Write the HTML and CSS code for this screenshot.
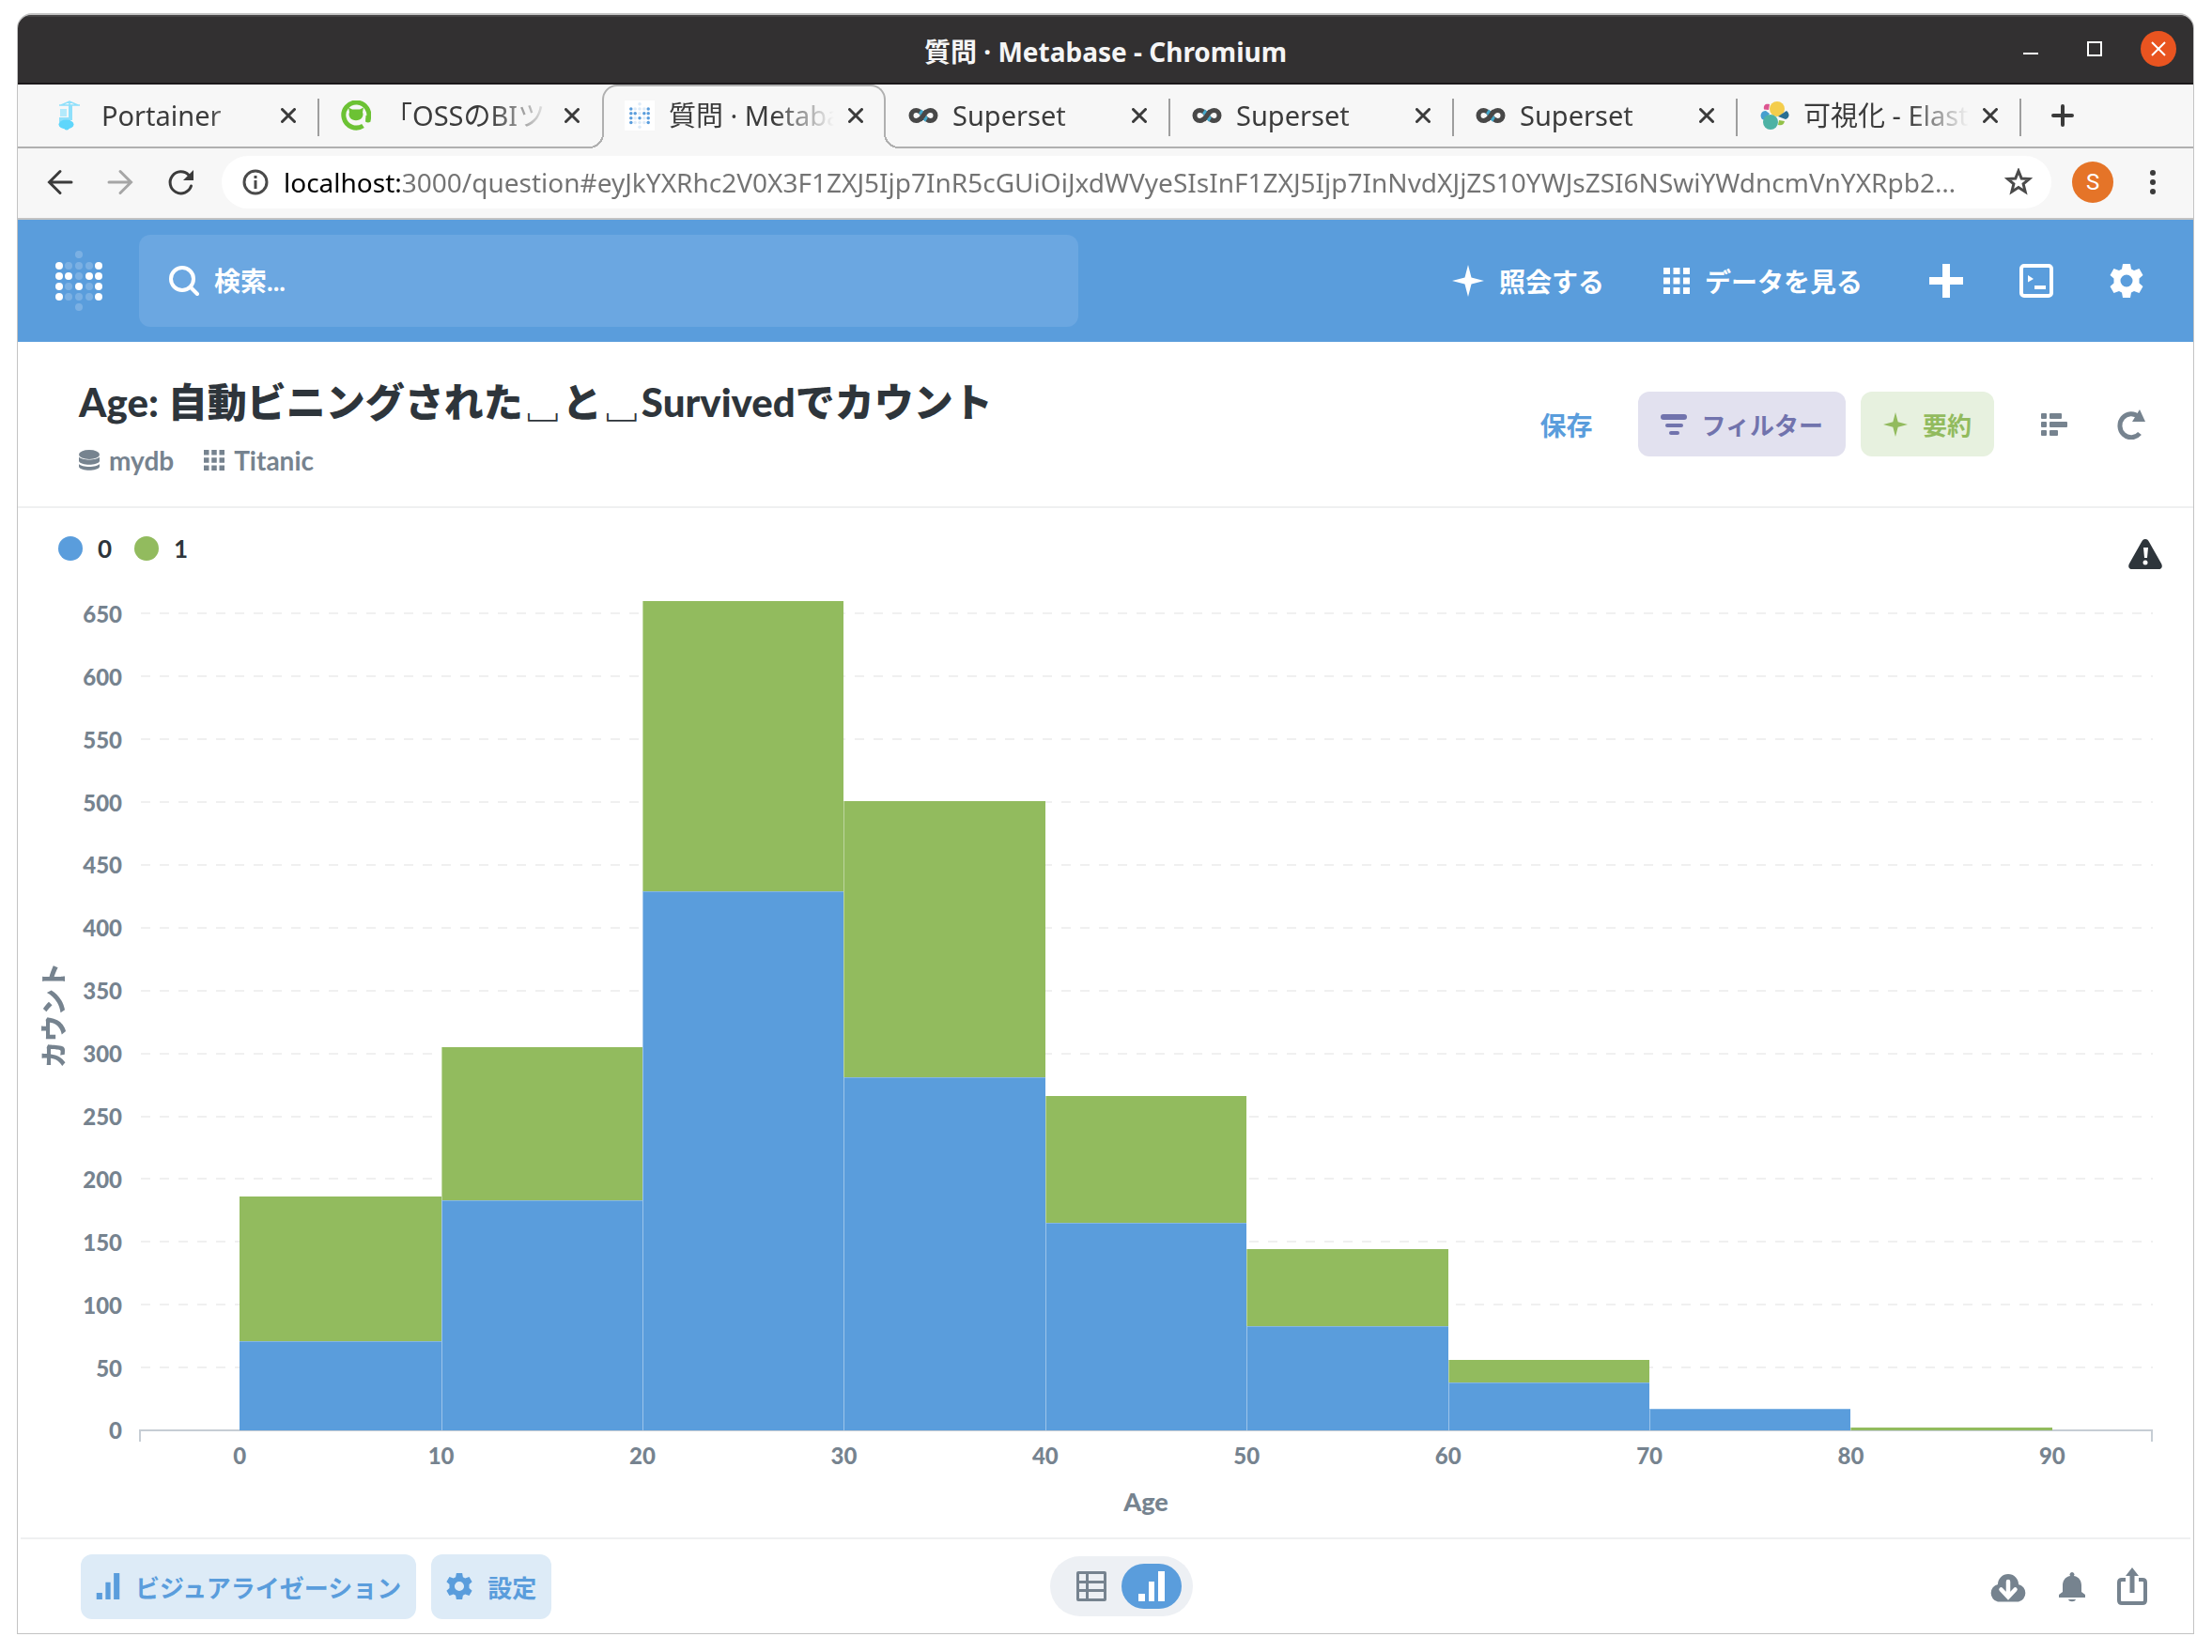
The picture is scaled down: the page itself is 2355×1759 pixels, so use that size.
FILE: index.html
```html
<!DOCTYPE html>
<html lang="ja">
<head>
<meta charset="utf-8">
<title>質問 · Metabase</title>
<link rel="stylesheet" href="styles.css">
</head>
<body>
<svg class="sprite" aria-hidden="true">
  <symbol id="i-logo" viewBox="0 0 50 64">
    <g fill="currentColor">
      <circle cx="4" cy="16" r="4"/><circle cx="46" cy="16" r="4"/>
      <circle cx="4" cy="27" r="4"/><circle cx="14" cy="27" r="4"/><circle cx="36" cy="27" r="4"/><circle cx="46" cy="27" r="4"/>
      <circle cx="4" cy="38" r="4"/><circle cx="25" cy="38" r="4"/><circle cx="46" cy="38" r="4"/>
      <circle cx="4" cy="49" r="4"/><circle cx="46" cy="49" r="4"/>
      <g opacity=".2">
        <circle cx="25" cy="4" r="4"/><circle cx="25" cy="60" r="4"/>
        <circle cx="14" cy="16" r="4"/><circle cx="25" cy="16" r="4"/><circle cx="36" cy="16" r="4"/>
        <circle cx="25" cy="27" r="4"/><circle cx="14" cy="38" r="4"/><circle cx="36" cy="38" r="4"/>
        <circle cx="14" cy="49" r="4"/><circle cx="25" cy="49" r="4"/><circle cx="36" cy="49" r="4"/>
      </g>
    </g>
  </symbol>
  <symbol id="i-x" viewBox="0 0 16 16"><path d="M1.5 1.5 14.5 14.5M14.5 1.5 1.5 14.5" stroke="currentColor" stroke-width="3" stroke-linecap="round" fill="none"/></symbol>
  <symbol id="i-infinity" viewBox="0 0 32 32">
    <path d="M16 16C13 11.500 11 10.500 8.500 10.500a5.500 5.500 0 0 0 0 11C11 21.500 13 20.500 16 16S21 10.500 23.500 10.500a5.500 5.500 0 0 1 0 11C21 21.500 19 20.500 16 16Z" fill="none" stroke="#484848" stroke-width="5"/>
    <path d="M12.500 11.500C14 12.500 15 14.500 16 16S18.500 20 19.500 20.600" fill="none" stroke="#45a9cc" stroke-width="5"/>
    <path d="M12.500 20.500C14 19.500 15 17.500 16 16S18 12.500 19.500 11.500" fill="none" stroke="#484848" stroke-width="5"/>
  </symbol>
  <symbol id="i-spark" viewBox="0 0 34 34"><path d="M17 0 20.500 13.500 34 17 20.500 20.500 17 34 13.500 20.500 0 17 13.500 13.500Z" fill="currentColor"/></symbol>
  <symbol id="i-grid" viewBox="0 0 28 28"><path d="M0 0h7v7H0zM10.500 0h7v7h-7zM21 0h7v7h-7zM0 10.500h7v7H0zM10.500 10.500h7v7h-7zM21 10.500h7v7h-7zM0 21h7v7H0zM10.500 21h7v7h-7zM21 21h7v7h-7z" fill="currentColor"/></symbol>
  <symbol id="i-gear" viewBox="0 0 36 36"><path fill="currentColor" fill-rule="evenodd" d="M14 0h8l1 5.500 3 1.500 5.500-2L35.500 12 31.500 15.500v5L35.500 24 31.500 31 26 29l-3 1.500L22 36h-8l-1-5.500L10 29l-5.500 2L.5 24l4-3.500v-5L.5 12 4.500 5 10 7l3-1.500ZM18 11.500a6.500 6.500 0 1 0 0 13 6.500 6.500 0 0 0 0-13Z"/></symbol>
  <symbol id="i-bars" viewBox="0 0 28 32"><path d="M0 24h7v8H0zM11 11h6v21h-6zM21 0h7v32h-7z" fill="currentColor"/></symbol>
</svg>

<div class="window">
  <header class="titlebar">
    <h1 class="window-title">質問 · Metabase - Chromium</h1>
    <div class="window-controls">
      <button class="wc" aria-label="最小化"><svg width="16" height="16"><path d="M0 13h16" stroke="#fff" stroke-width="2"/></svg></button>
      <button class="wc" aria-label="最大化"><svg width="16" height="16"><rect x="1" y="1" width="14" height="14" fill="none" stroke="#fff" stroke-width="2"/></svg></button>
      <button class="wc wc-close" aria-label="閉じる"><svg width="16" height="16"><path d="M1 1l14 14M15 1 1 15" stroke="#fff" stroke-width="2"/></svg></button>
    </div>
  </header>

  <nav class="tabs">
    <div class="tab">
      <svg class="favicon" viewBox="0 0 32 32"><g fill="none" stroke="#8fe0fb" stroke-width="1.500"><path d="M2 5h22M13 1v6M4 5l9-4 9 4"/></g><path d="M12 5h4v16h-4z" fill="#8fe0fb"/><path d="M3 9h7v8H3z" fill="#b3eafc"/><path d="M2 18h12v5H2z" fill="#8fe0fb"/><ellipse cx="9.500" cy="25.500" rx="8" ry="5" fill="#5fd6fb"/><circle cx="10" cy="29" r="2.500" fill="#5fd6fb"/></svg>
      <a class="tab-title" href="#">Portainer</a>
      <button class="tab-close" aria-label="タブを閉じる"><svg><use href="#i-x"/></svg></button>
    </div>
    <div class="tab no-rule">
      <svg class="favicon" viewBox="0 0 32 32"><path d="M28.900 20.500A13.500 13.500 0 1 0 23.500 27" fill="none" stroke="#6cc234" stroke-width="5"/><path d="M26 22.500q3 2 5.500 0V16h-5z" fill="#6cc234"/><path d="m8 7.500 4 2h8l4-2-1 5a7.500 6.500 0 1 1-14 0Z" fill="#6cc234"/></svg>
      <a class="tab-title" href="#">「OSSのBIツ</a>
      <button class="tab-close" aria-label="タブを閉じる"><svg><use href="#i-x"/></svg></button>
    </div>
    <div class="tab active no-rule">
      <span class="favicon favicon-metabase"><svg><use href="#i-logo"/></svg></span>
      <a class="tab-title" href="#" aria-current="page">質問 · Metabase</a>
      <button class="tab-close" aria-label="タブを閉じる"><svg><use href="#i-x"/></svg></button>
    </div>
    <div class="tab">
      <svg class="favicon"><use href="#i-infinity"/></svg>
      <a class="tab-title" href="#">Superset</a>
      <button class="tab-close" aria-label="タブを閉じる"><svg><use href="#i-x"/></svg></button>
    </div>
    <div class="tab">
      <svg class="favicon"><use href="#i-infinity"/></svg>
      <a class="tab-title" href="#">Superset</a>
      <button class="tab-close" aria-label="タブを閉じる"><svg><use href="#i-x"/></svg></button>
    </div>
    <div class="tab">
      <svg class="favicon"><use href="#i-infinity"/></svg>
      <a class="tab-title" href="#">Superset</a>
      <button class="tab-close" aria-label="タブを閉じる"><svg><use href="#i-x"/></svg></button>
    </div>
    <div class="tab">
      <svg class="favicon" viewBox="0 0 32 32"><ellipse cx="19" cy="9" rx="8" ry="8" fill="#f4cd4c"/><path d="M5 9.500c-1-5 2-6.500 6-5.500l-1 6z" fill="#dc5590"/><path d="M3 20c-3-4-1-9 4-9l4 3-5 7z" fill="#459fcf"/><path d="M20 17l9-6c4 3 3 8-1 9z" fill="#2b6f92"/><path d="M21 21l6 1c-1 4-3 5-7 4z" fill="#93c148"/><ellipse cx="12" cy="23" rx="8" ry="8" fill="#4db2a4"/></svg>
      <a class="tab-title" href="#">可視化 - Elastic</a>
      <button class="tab-close" aria-label="タブを閉じる"><svg><use href="#i-x"/></svg></button>
    </div>
    <button class="tab-new" aria-label="新しいタブ"><svg width="24" height="24"><path d="M12 2v20M2 12h20" stroke="#3b3b3b" stroke-width="4" stroke-linecap="round"/></svg></button>
  </nav>

  <div class="toolbar">
    <button class="nav-btn" aria-label="戻る"><svg width="32" height="32" fill="none" stroke="#3b3b3b" stroke-width="3" stroke-linecap="round"><path d="M28 16H5M16 4.500 4.500 16 16 27.500"/></svg></button>
    <button class="nav-btn" aria-label="進む"><svg width="32" height="32" fill="none" stroke="#a6a6a6" stroke-width="3" stroke-linecap="round"><path d="M4 16h23M16 4.500 27.500 16 16 27.500"/></svg></button>
    <button class="nav-btn" aria-label="再読み込み"><svg width="32" height="32"><path d="M27.500 20A11.500 11.500 0 1 1 25 8.500" fill="none" stroke="#3b3b3b" stroke-width="3" stroke-linecap="round"/><path d="M30 3v11H19z" fill="#3b3b3b"/></svg></button>
    <div class="omnibox">
      <button class="omni-btn" aria-label="サイト情報"><svg width="28" height="28"><circle cx="14" cy="14" r="12" fill="none" stroke="#4a4a4a" stroke-width="3"/><path d="M14 7v3M14 12v9" stroke="#4a4a4a" stroke-width="3"/></svg></button>
      <input class="url" type="text" aria-label="アドレス" value="localhost:3000/question#eyJkYXRhc2V0X3F1ZXJ5Ijp7InR5cGUiOiJxdWVyeSIsInF1ZXJ5Ijp7InNvdXJjZS10YWJsZSI6NSwiYWdncmVnYXRpb2…">
      <button class="omni-btn" aria-label="ブックマーク"><svg width="30" height="30"><path d="m15 3 3.200 8 8.300.5-6.400 5.400 2.100 8.300L15 20.600l-7.200 4.600 2.100-8.300-6.400-5.400 8.300-.5z" fill="none" stroke="#4a4a4a" stroke-width="3"/></svg></button>
    </div>
    <button class="avatar" aria-label="プロフィール">S</button>
    <button class="nav-btn" aria-label="メニュー"><svg width="32" height="32" fill="#3b3b3b"><circle cx="16" cy="6" r="3"/><circle cx="16" cy="16" r="3"/><circle cx="16" cy="26" r="3"/></svg></button>
  </div>

  <div class="app-bar">
    <a class="logo" href="#" aria-label="ホーム"><svg width="50" height="64"><use href="#i-logo"/></svg></a>
    <label class="search">
      <svg width="32" height="32" fill="none" stroke="#fff" stroke-width="4" stroke-linecap="round"><circle cx="14" cy="14" r="12"/><path d="m23 23 7 7"/></svg>
      <input type="search" aria-label="検索" placeholder="検索...">
    </label>
    <nav class="app-nav">
      <a class="app-link ask" href="#"><svg width="34" height="34"><use href="#i-spark"/></svg>照会する</a>
      <a class="app-link browse" href="#"><svg width="28" height="28"><use href="#i-grid"/></svg>データを見る</a>
      <button class="app-icon" aria-label="作成"><svg width="36" height="36"><path d="M18 0v36M0 18h36" stroke="#fff" stroke-width="8"/></svg></button>
      <button class="app-icon" aria-label="SQL"><svg width="36" height="36"><rect x="2" y="2" width="32" height="32" rx="3" fill="none" stroke="#fff" stroke-width="4"/><path d="m9 12 6 4-6 3.500zM16 23h12v4H16z" fill="#fff"/></svg></button>
      <button class="app-icon" aria-label="設定"><svg width="36" height="36"><use href="#i-gear"/></svg></button>
    </nav>
  </div>

  <section class="question-head">
    <div class="question-info">
      <h2 class="question-title">Age: 自動ビニングされた␣と␣Survivedでカウント</h2>
      <div class="crumbs">
        <a href="#"><svg width="22" height="22" fill="currentColor"><ellipse cx="11" cy="5" rx="11" ry="5"/><path d="M0 7.500c3 4 19 4 22 0V12c-2 5-20 5-22 0zM0 15c3 4 19 4 22 0v3c-2 5-20 5-22 0z"/></svg>mydb</a>
        <a href="#"><svg width="22" height="22"><use href="#i-grid"/></svg>Titanic</a>
      </div>
    </div>
    <div class="question-actions">
      <button class="save">保存</button>
      <button class="btn btn-filter"><svg width="28" height="24" fill="currentColor"><rect y="1" width="28" height="6" rx="3"/><rect x="5" y="11" width="19" height="4" rx="2"/><rect x="9" y="19" width="11" height="4" rx="2"/></svg>フィルター</button>
      <button class="btn btn-summary"><svg width="26" height="26"><use href="#i-spark"/></svg>要約</button>
      <button class="plain list" aria-label="通知"><svg width="28" height="24" fill="currentColor"><rect width="6" height="6" rx="1"/><rect x="9" width="13" height="6" rx="1"/><rect y="9" width="6" height="6" rx="1"/><rect x="9" y="9" width="19" height="6" rx="1"/><rect y="18" width="6" height="6" rx="1"/><rect x="9" y="18" width="9" height="6" rx="1"/></svg></button>
      <button class="plain" aria-label="更新"><svg width="32" height="32"><path d="M25 25.500A12 12.500 0 1 1 24 8" fill="none" stroke="currentColor" stroke-width="5"/><path d="M25 0l6 13H17z" fill="currentColor"/></svg></button>
    </div>
  </section>

  <main class="viz">
    <div class="legend">
      <span class="key key-0">0</span>
      <span class="key key-1">1</span>
      <svg class="warning" width="36" height="32"><path d="M18 0c2 0 3 1 4 3l13 23c2 4 0 6-3 6H4c-3 0-5-2-3-6L14 3c1-2 2-3 4-3z" fill="#2e353b"/><path d="M16 9h5l-1 11h-3z" fill="#fff"/><circle cx="18" cy="25" r="2.500" fill="#fff"/></svg>
    </div>
    <div class="chart">
      <div class="y-title">カウント</div>
      <div class="bands">
        <div class="headroom"></div>
        <div class="band"><div class="tick"><span>650</span></div></div>
        <div class="band"><div class="tick"><span>600</span></div></div>
        <div class="band"><div class="tick"><span>550</span></div></div>
        <div class="band"><div class="tick"><span>500</span></div></div>
        <div class="band"><div class="tick"><span>450</span></div></div>
        <div class="band"><div class="tick"><span>400</span></div></div>
        <div class="band"><div class="tick"><span>350</span></div></div>
        <div class="band"><div class="tick"><span>300</span></div></div>
        <div class="band"><div class="tick"><span>250</span></div></div>
        <div class="band"><div class="tick"><span>200</span></div></div>
        <div class="band"><div class="tick"><span>150</span></div></div>
        <div class="band"><div class="tick"><span>100</span></div></div>
        <div class="band"><div class="tick"><span>50</span></div></div>
        <div class="tick zero"><span>0</span></div>
      </div>
      <div class="bars">
        <div class="bar"><i class="s1" style="--v:115"></i><i class="s0" style="--v:71"></i></div>
        <div class="bar"><i class="s1" style="--v:122"></i><i class="s0" style="--v:183"></i></div>
        <div class="bar"><i class="s1" style="--v:231"></i><i class="s0" style="--v:429"></i></div>
        <div class="bar"><i class="s1" style="--v:220"></i><i class="s0" style="--v:281"></i></div>
        <div class="bar"><i class="s1" style="--v:101"></i><i class="s0" style="--v:165"></i></div>
        <div class="bar"><i class="s1" style="--v:61"></i><i class="s0" style="--v:83"></i></div>
        <div class="bar"><i class="s1" style="--v:18"></i><i class="s0" style="--v:38"></i></div>
        <div class="bar"><i class="s0" style="--v:17"></i></div>
        <div class="bar"><i class="s1" style="--v:2"></i></div>
      </div>
      <div class="x-axis">
        <div class="x-line"></div>
        <div class="x-labels"><span>0</span><span>10</span><span>20</span><span>30</span><span>40</span><span>50</span><span>60</span><span>70</span><span>80</span><span>90</span></div>
        <div class="x-title">Age</div>
      </div>
    </div>
  </main>

  <footer class="footer">
    <div class="footer-left">
      <button class="btn btn-blue"><svg class="viz-icon" width="26" height="28"><use href="#i-bars"/></svg>ビジュアライゼーション</button>
      <button class="btn btn-blue"><svg width="28" height="28"><use href="#i-gear"/></svg>設定</button>
    </div>
    <div class="toggle">
      <button class="toggle-btn" aria-label="テーブル"><svg width="32" height="32"><path fill="currentColor" fill-rule="evenodd" d="M2 0h28a2 2 0 0 1 2 2v28a2 2 0 0 1-2 2H2a2 2 0 0 1-2-2V2a2 2 0 0 1 2-2ZM3 3v7h7V3zM13 3v7h16V3zM3 13v6h7v-6zM13 13v6h16v-6zM3 22v7h7v-7zM13 22v7h16v-7z"/></svg></button>
      <button class="toggle-btn on" aria-label="グラフ" aria-pressed="true"><svg width="28" height="32"><use href="#i-bars"/></svg></button>
    </div>
    <div class="footer-right">
      <button class="plain" aria-label="ダウンロード"><svg width="40" height="42"><path d="M9 19a11 11 0 0 1 22 0 9.500 9.500 0 0 1 0 18.500H9A9.500 9.500 0 0 1 9 19Z" fill="currentColor"/><path d="M20 16v16M12.500 24.500 20 32.500l7.500-8" fill="none" stroke="#fff" stroke-width="4.500" stroke-linecap="round"/></svg></button>
      <button class="plain bell" aria-label="アラート"><svg width="28" height="42" fill="currentColor"><path d="M12 10a2.500 2.500 0 1 1 4 0c6 1 8 6 8 10v7l4 3v3H0v-3l4-3v-7c0-4 2-9 8-10ZM10 35h8c-1 3-7 3-8 0Z"/></svg></button>
      <button class="plain" aria-label="共有"><svg width="32" height="42"><path d="M9 14H5q-3 0-3 3v19q0 3 3 3h22q3 0 3-3V17q0-3-3-3h-4" fill="none" stroke="currentColor" stroke-width="4"/><path d="M16 1l7 9h-4.500v18h-5V10H9z" fill="currentColor"/></svg></button>
    </div>
  </footer>
</div>
</body>
</html>
```
FILE: styles.css
```css
* { box-sizing: border-box; }

:root {
  --brand: #5a9ddc;
  --green: #92bb5e;
  --purple: #7173ad;
  --grey: #76838f;
  --dark: #2e353b;
  --chrome: #f7f7f7;
}

body {
  margin: 0;
  padding: 14px 19px 19px 18px;
  min-height: 100vh;
  display: flex;
  background: #fff;
  font-family: Lato, "Noto Sans CJK JP", sans-serif;
}

button {
  padding: 0;
  border: 0;
  background: none;
  color: inherit;
  font: inherit;
  display: flex;
  align-items: center;
  justify-content: center;
  cursor: pointer;
}

a { color: inherit; text-decoration: none; }
svg { display: block; flex: none; }
.sprite { position: absolute; width: 0; height: 0; }

.window {
  flex: 1;
  min-width: 0;
  display: flex;
  flex-direction: column;
  border: 1px solid #c3c3c3;
  border-top-width: 2px;
  border-radius: 16px 16px 0 0;
  overflow: hidden;
}

/* Title bar */
.titlebar {
  height: 74px;
  display: grid;
  grid-template-columns: 1fr auto 1fr;
  align-items: center;
  background: #323031;
  border-top: 2px solid #444243;
  border-bottom: 2px solid #1c191b;
  color: #f5f5f5;
  font-family: "Noto Sans", "Noto Sans CJK JP", sans-serif;
}
.window-title {
  grid-column: 2;
  margin: 0;
  padding-top: 4px;
  font-size: 28px;
  line-height: 40px;
  font-weight: 700;
}
.window-controls {
  display: flex;
  justify-content: flex-end;
  align-items: center;
  gap: 30px;
  padding: 0 18px 2px 0;
}
.wc { width: 38px; height: 38px; border-radius: 50%; }
.wc-close { background: #e95420; }

/* Tab strip */
.tabs {
  height: 68px;
  display: flex;
  padding-left: 18px;
  background: var(--chrome);
  border-bottom: 2px solid #b0b0b0;
  color: #3b3b3b;
  font-family: "Noto Sans", "Noto Sans CJK JP", sans-serif;
}
.tab {
  position: relative;
  flex: 0 1 302px;
  min-width: 0;
  display: flex;
  align-items: center;
  gap: 15px;
  padding: 0 24px 0 24px;
}
.tab:not(.no-rule)::after {
  content: "";
  position: absolute;
  right: -1px;
  top: 15px;
  width: 2px;
  height: 40px;
  background: #9e9e9e;
}
.favicon { width: 32px; height: 32px; flex: none; }
.favicon-metabase {
  display: grid;
  place-items: center;
  background: #fff;
  color: var(--brand);
}
.favicon-metabase svg { width: 22px; height: 28px; }
.tab-title {
  flex: 1;
  min-width: 0;
  overflow: hidden;
  white-space: nowrap;
  font-size: 29px;
  line-height: 40px;
  mask-image: linear-gradient(to left, transparent, #000 64px);
}
.tab-close svg { width: 16px; height: 16px; }
.tab.active {
  z-index: 1;
  margin-bottom: -2px;
  padding: 0 22px 4px;
  background: var(--chrome);
  border: 2px solid #b0b0b0;
  border-bottom: 0;
  border-radius: 16px 16px 0 0;
}
.tab.active::before,
.tab.active::after {
  content: "";
  position: absolute;
  bottom: 0;
  top: auto;
  width: 16px;
  height: 16px;
}
.tab.active::before {
  left: -16px;
  background: radial-gradient(circle at 0 0, var(--chrome) 14px, #b0b0b0 14px 16px, var(--chrome) 16px);
}
.tab.active::after {
  right: -16px;
  background: radial-gradient(circle at 100% 0, var(--chrome) 14px, #b0b0b0 14px 16px, var(--chrome) 16px);
}
.tab-new { margin-left: 33px; }

/* Toolbar */
.toolbar {
  height: 76px;
  display: flex;
  align-items: center;
  padding: 8px 27px 10px 29px;
  background: var(--chrome);
  border-bottom: 2px solid #c3c3c3;
  font-family: "Noto Sans", sans-serif;
}
.nav-btn { width: 32px; height: 32px; margin-right: 32px; }
.nav-btn:last-child { margin: 0; }
.omnibox {
  flex: 1;
  height: 56px;
  min-width: 0;
  display: flex;
  align-items: center;
  padding: 0 20px 0 22px;
  margin-right: 22px;
  margin-left: -4px;
  gap: 16px;
  background: #fff;
  border-radius: 28px;
}
.url {
  flex: 1;
  min-width: 0;
  height: 40px;
  padding: 0;
  border: 0;
  outline: 0;
  font-family: inherit;
  font-size: 28px;
  color: transparent;
  background: linear-gradient(to right, #000 126px, #737373 126px);
  background-clip: text;
}
.avatar {
  width: 44px;
  height: 44px;
  margin-right: 26px;
  border-radius: 50%;
  background: #e57428;
  color: #fff;
  font-family: Roboto, sans-serif;
  font-size: 24px;
}

/* Application bar */
.app-bar {
  height: 130px;
  display: flex;
  align-items: center;
  padding: 0 53px 0 40px;
  background: var(--brand);
  color: #fff;
  font-size: 28px;
  font-weight: 700;
}
.logo { margin-right: 39px; }
.search {
  flex: 0 1 1000px;
  height: 98px;
  display: flex;
  align-items: center;
  gap: 16px;
  padding: 0 32px;
  border-radius: 12px;
  background: #6ba7e1;
}
.search input {
  flex: 1;
  min-width: 0;
  padding: 0;
  border: 0;
  outline: 0;
  background: none;
  color: #fff;
  font: inherit;
}
.search input::placeholder { color: #fff; opacity: 1; }
.app-nav {
  margin-left: auto;
  display: flex;
  align-items: center;
  gap: 60px;
  white-space: nowrap;
}
.app-link { display: flex; align-items: center; gap: 16px; }
.ask { margin-right: 3px; }
.app-icon:first-of-type { margin-left: 11px; }

/* Question header */
.question-head {
  height: 177px;
  display: flex;
  align-items: center;
  justify-content: space-between;
  padding: 0 50px 0 65px;
  border-bottom: 2px solid #eff0f1;
}
.question-info { padding-top: 2px; }
.question-title {
  margin: 0;
  font-size: 42px;
  line-height: 60px;
  font-weight: 900;
  color: var(--dark);
}
.crumbs {
  display: flex;
  gap: 32px;
  color: var(--grey);
  font-size: 28px;
  line-height: 36px;
  font-weight: 700;
  padding-top: 14px;
}
.crumbs a { display: flex; align-items: center; gap: 10px; }
.question-actions { display: flex; align-items: center; color: var(--grey); }
.save {
  margin-right: 48px;
  color: var(--brand);
  font-size: 28px;
  font-weight: 700;
}
.btn {
  height: 69px;
  padding: 0 24px;
  gap: 16px;
  border-radius: 12px;
  font-size: 26px;
  font-weight: 700;
  white-space: nowrap;
}
.btn-filter { margin-right: 16px; background: #e2e1ef; color: var(--purple); }
.btn-summary { margin-right: 50px; background: #e7f1df; color: var(--green); }
.list { margin-right: 52px; }

/* Chart */
.viz {
  flex: 1;
  min-height: 600px;
  display: flex;
  flex-direction: column;
}
.legend {
  display: flex;
  align-items: center;
  gap: 24px;
  padding: 27px 33px 40px 43px;
  font-size: 26px;
  line-height: 32px;
  font-weight: 700;
  color: var(--dark);
}
.key { display: flex; align-items: center; gap: 16px; }
.key::before {
  content: "";
  width: 26px;
  height: 26px;
  border-radius: 50%;
  background: var(--brand);
}
.key-1::before { background: var(--green); }
.warning { margin-left: auto; position: relative; top: 6px; }
.chart {
  flex: 1;
  display: grid;
  grid-template-columns: 28px 77px 1fr;
  grid-template-rows: 1fr auto;
  padding: 0 43px 0 24px;
  color: var(--grey);
  font-size: 24px;
  font-weight: 900;
}
.y-title {
  place-self: center;
  writing-mode: vertical-rl;
  text-orientation: sideways;
  transform: rotate(180deg);
  font-size: 28px;
  line-height: 28px;
}
.bands {
  grid-row: 1;
  grid-column: 2 / 4;
  display: flex;
  flex-direction: column;
}
.headroom { flex: 10; }
.band { flex: 50; }
.tick { height: 0; display: flex; align-items: center; }
.tick span { width: 59px; margin-right: 20px; text-align: right; }
.tick:not(.zero)::after {
  content: "";
  flex: 1;
  height: 2px;
  background: repeating-linear-gradient(to right, #f0f0f0 0 10px, transparent 10px 20px);
}
.bars {
  grid-row: 1;
  grid-column: 3;
  z-index: 1;
  display: flex;
  align-items: flex-end;
  padding: 0 5%;
}
.bar {
  flex: 1;
  height: 100%;
  display: flex;
  flex-direction: column;
  justify-content: flex-end;
}
.bar i { display: block; height: calc(var(--v) / 660 * 100%); }
.bar + .bar i { border-left: 1px solid rgba(255, 255, 255, .4); }
.s0 { background: var(--brand); box-shadow: inset 0 1px rgba(255, 255, 255, .25); }
.s1 { background: var(--green); }
.x-axis { grid-column: 3; }
.x-line {
  height: 13px;
  margin-top: -1px;
  border: 2px solid #c6cdd4;
  border-bottom: 0;
}
.x-labels { display: flex; line-height: 30px; }
.x-labels span { flex: 1; text-align: center; }
.x-title {
  padding: 16px 0 20px;
  text-align: center;
  font-size: 27px;
  line-height: 36px;
}

/* Footer */
.footer {
  height: 102px;
  display: grid;
  grid-template-columns: 1fr auto 1fr;
  align-items: center;
  margin: 0 3px;
  padding: 0 46px 0 64px;
  border-top: 2px solid #eff0f1;
  color: var(--grey);
}
.footer-left { display: flex; gap: 16px; }
.btn-blue { padding: 0 16px; background: #ddebf7; color: var(--brand); }
.toggle {
  display: flex;
  align-items: center;
  height: 64px;
  margin-left: 16px;
  padding: 0 12px;
  border-radius: 32px;
  background: #edf0f4;
}
.toggle-btn { width: 64px; height: 48px; border-radius: 24px; }
.on { background: var(--brand); color: #fff; }
.footer-right { display: flex; justify-content: flex-end; gap: 34px; }
```
